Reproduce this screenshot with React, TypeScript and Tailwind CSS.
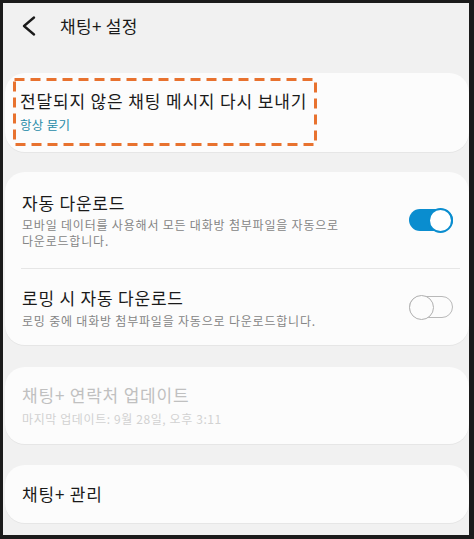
const font = { fontFamily: '"Noto Sans CJK KR", "Noto Sans", sans-serif' }

const Toggle = ({ on }: { on: boolean }) => {
    return (
        <div className="relative w-[44px] h-[25px] shrink-0">
            <div
                className={
                    on
                        ? "absolute inset-x-0 top-[1.5px] bottom-[1.5px] rounded-full bg-[#0a8dcf]"
                        : "absolute inset-x-0 top-[1.5px] bottom-[1.5px] rounded-full border-[1.5px] border-[#b9b9b9] bg-[#fcfcfc]"
                }
            />
            <div
                className={
                    on
                        ? "absolute right-0 top-0 w-[25px] h-[25px] rounded-full bg-white border-2 border-[#0a8dcf]"
                        : "absolute left-0 top-0 w-[25px] h-[25px] rounded-full bg-[#fcfcfc] border-[1.5px] border-[#b0b0b0]"
                }
            />
        </div>
    )
}

const Card = ({ children, className = "" }: { children: React.ReactNode; className?: string }) => (
    <div className={"ml-[2px] rounded-[20px] bg-[#fcfcfc] shadow-[0_1px_0_#e6e6e6] " + className}>{children}</div>
)

export default function App() {
    return (
        <div
            className="w-[474px] h-[539px] bg-[#f1f1f1] border-l-[3px] border-t-[3px] border-r-[5px] border-b-[4px] border-[#1b1b1b] flex flex-col overflow-hidden"
            style={font}
        >
            <div className="h-[45px] flex items-center pl-[19px]">
                {/* back arrow */}
                <svg width="14" height="20" viewBox="0 0 14 20" fill="none">
                    <polyline points="12,1.5 2,10 12,18.5" stroke="#1a1a1a" strokeWidth="2.3" strokeLinecap="round" strokeLinejoin="round" />
                </svg>
                <div className="ml-[24px] text-[17px] tracking-[0.3px] text-[#1a1a1a] leading-none">채팅+ 설정</div>
            </div>

            <Card className="mt-[25px] h-[79px] pt-[5px] pl-[8px]">
                <div className="relative w-[304px] h-[68px] pl-[7px] pt-[11px]">
                    <svg className="absolute inset-0" width="304" height="68">
                        <rect
                            x="1.5"
                            y="1.5"
                            width="301"
                            height="65"
                            fill="none"
                            stroke="#e8722f"
                            strokeWidth="3"
                            strokeDasharray="10 6"
                        />
                    </svg>
                    <div className="text-[17px] leading-[24px] tracking-[0.85px] text-[#1a1a1a]">전달되지 않은 채팅 메시지 다시 보내기</div>
                    <div className="mt-[3px] text-[12.5px] leading-[18px] tracking-[0.3px] text-[#1f8ba8]">항상 묻기</div>
                </div>
            </Card>

            <Card className="mt-[20px] h-[173px] flex flex-col">
                <div className="h-[96px] flex items-center pl-[17px] pr-[16px]">
                    <div className="grow">
                        <div className="text-[17px] leading-[24px] tracking-[0.8px] text-[#1a1a1a]">자동 다운로드</div>
                        <div className="mt-[2px] text-[12px] leading-[16px] tracking-[0.8px] text-[#858585]">
                            <div>모바일 데이터를 사용해서 모든 대화방 첨부파일을 자동으로</div>
                            <div>다운로드합니다.</div>
                        </div>
                    </div>
                    <Toggle on={true} />
                </div>
                <div className="ml-[16px] mr-[9px] h-px bg-[#e6e6e6]" />
                <div className="grow flex items-center pl-[17px] pr-[16px]">
                    <div className="grow">
                        <div className="text-[17px] leading-[24px] tracking-[0.8px] text-[#1a1a1a]">로밍 시 자동 다운로드</div>
                        <div className="mt-[3px] text-[12px] leading-[16px] tracking-[0.8px] text-[#858585]">
                            로밍 중에 대화방 첨부파일을 자동으로 다운로드합니다.
                        </div>
                    </div>
                    <Toggle on={false} />
                </div>
            </Card>

            <Card className="mt-[22px] h-[77px] pl-[17px] pt-[16px]">
                <div className="text-[17px] leading-[24px] tracking-[0.8px] text-[#c0c0c0]">채팅+ 연락처 업데이트</div>
                <div className="mt-[4px] text-[12px] leading-[16px] tracking-[0.6px] text-[#d2d2d2]">마지막 업데이트: 9월 28일, 오후 3:11</div>
            </Card>

            <Card className="mt-[21px] h-[58px] pl-[17px] flex items-center">
                <div className="text-[17px] leading-[24px] tracking-[0.8px] text-[#1a1a1a]">채팅+ 관리</div>
            </Card>
        </div>
    )
}
